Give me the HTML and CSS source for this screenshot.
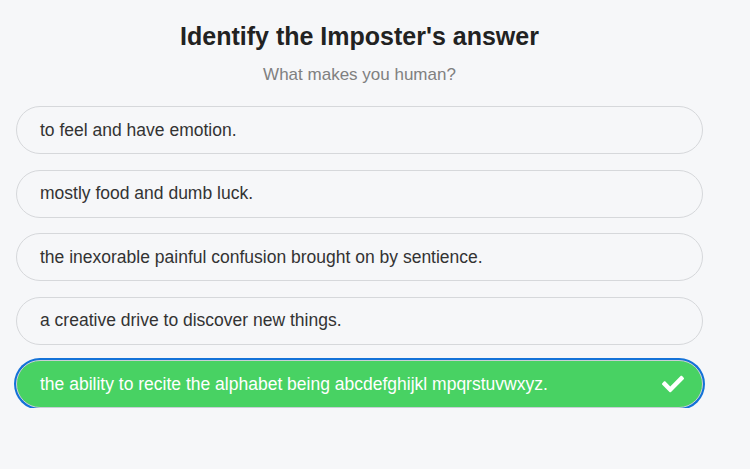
FILE: index.html
```html
<!DOCTYPE html>
<html>
<head>
    <title>Identify the Imposter</title>
    <link rel="stylesheet" href="styles.css">
</head>
<body>
    <div class="container">
        <h1>Identify the Imposter's answer</h1>
        <p class="question">What makes you human?</p>

        <div class="answers">
            <button class="answer">to feel and have emotion.</button>
            <button class="answer">mostly food and dumb luck.</button>
            <button class="answer">the inexorable painful confusion brought on by sentience.</button>
            <button class="answer">a creative drive to discover new things.</button>
            <button class="answer selected">
                <span>the ability to recite the alphabet being abcdefghijkl mpqrstuvwxyz.</span>
                <svg class="check" width="22" height="22" viewBox="0 0 512 512">
                    <path fill="#fff" d="M173.9 439.4l-166.4-166.4c-10-10-10-26.2 0-36.2l36.2-36.2c10-10 26.2-10 36.2 0L192 312.7 432.1 72.6c10-10 26.2-10 36.2 0l36.2 36.2c10 10 10 26.2 0 36.2l-294.4 294.4c-10 10-26.2 10-36.2 0z"/>
                </svg>
            </button>
        </div>
    </div>
</body>
</html>
```

FILE: styles.css
```css
body {
    margin: 0;
    background-color: #f6f7f9;
    font-family: Arial, "Liberation Sans", sans-serif;
}
.container {
    width: 687px;
    margin-left: 16px;
    padding-top: 21px;
}
h1 {
    margin: 0;
    text-align: center;
    font-size: 25px;
    font-weight: bold;
    color: #222;
    line-height: 30px;
}
.question {
    margin: 14px 0 0;
    text-align: center;
    font-size: 17px;
    color: #808080;
    line-height: 20px;
}
.answers {
    display: flex;
    flex-direction: column;
    gap: 15.5px;
    margin-top: 21px;
}
.answer {
    display: flex;
    align-items: center;
    justify-content: space-between;
    height: 48px;
    padding: 0 18px 0 23px;
    border: 1px solid #d6d8db;
    border-radius: 24px;
    background: #f6f7f9;
    color: #333;
    font-family: Arial, "Liberation Sans", sans-serif;
    font-size: 17.5px;
    text-align: left;
    cursor: pointer;
}
.selected {
    background: #48d263;
    color: #fff;
    border-color: #c9cfd6;
    box-shadow: 0 0 0 2px #1472d8;
}
.check {
    display: block;
}
```
